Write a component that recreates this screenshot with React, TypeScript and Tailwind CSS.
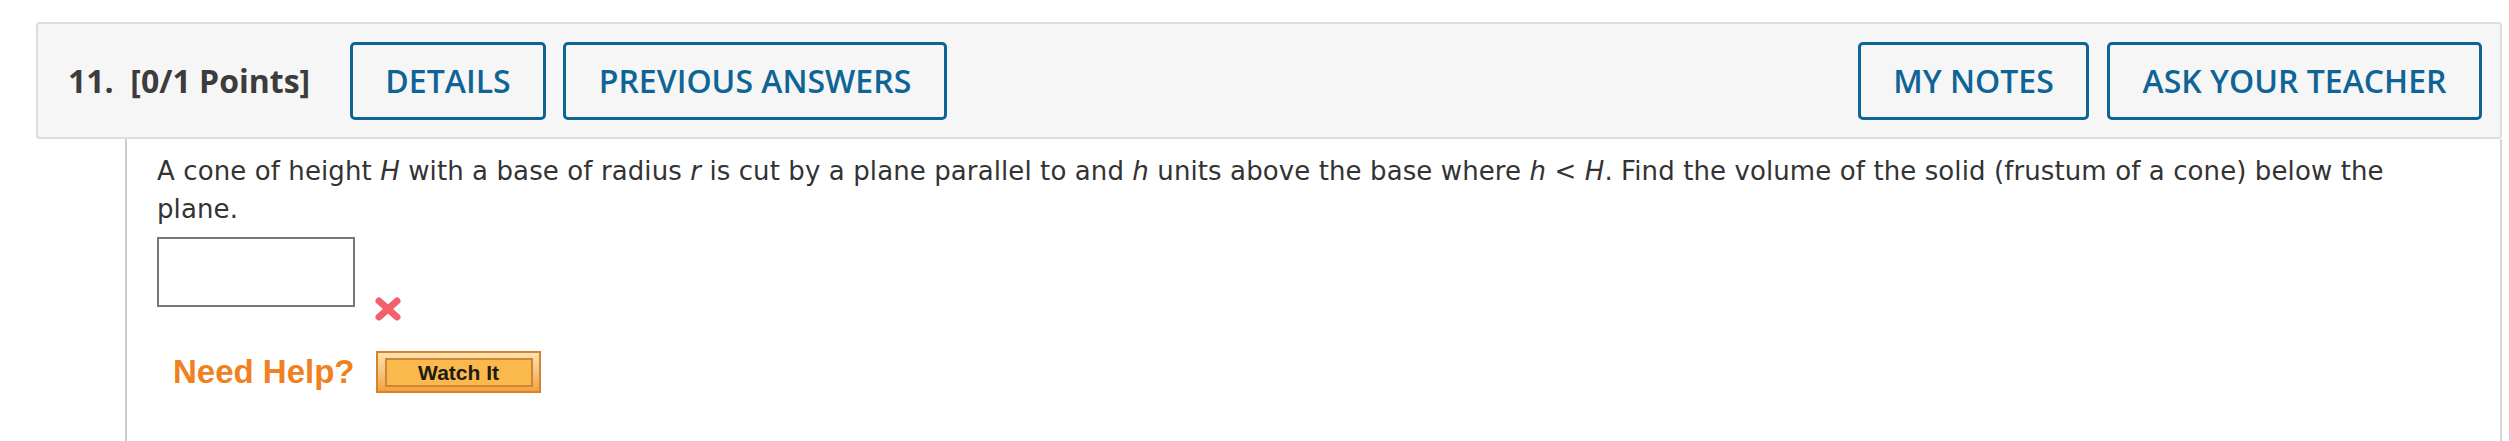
import React from 'react';

const HeaderButton: React.FC<{ label: string; width: string }> = ({ label, width }) => (
  <button
    className={`${width} flex h-[78px] items-center justify-center rounded-[5px] border-[3px] border-[#0f6496] bg-transparent text-[32px] font-semibold text-[#0f6496]`}
  >
    {label}
  </button>
);

const WrongMark = () => (
  <svg width="28" height="26" viewBox="0 0 28 26" className="mt-[59px] ml-[19px] shrink-0">
    <path d="M5 5 L23 21 M23 5 L5 21" stroke="#f1606b" strokeWidth="7" strokeLinecap="round" />
  </svg>
);

export default function App() {
  return (
    <div className="min-h-[441px] bg-white pt-[22px] pl-[36px] pr-[7px]">
      {/* question header */}
      <div className="flex h-[117px] items-center justify-between rounded-[4px] border-2 border-[#dddddd] bg-[#f6f6f6] pl-[30px] pr-[18px] font-['Open_Sans',sans-serif]">
        <div className="flex items-center">
          <span className="w-[282px] whitespace-pre text-[32px] font-bold text-[#3c3c3c]">11.  [0/1 Points]</span>
          <div className="flex gap-[17px]">
            <HeaderButton label="DETAILS" width="w-[196px]" />
            <HeaderButton label="PREVIOUS ANSWERS" width="w-[384px]" />
          </div>
        </div>
        <div className="flex gap-[18px]">
          <HeaderButton label="MY NOTES" width="w-[231px]" />
          <HeaderButton label="ASK YOUR TEACHER" width="w-[375px]" />
        </div>
      </div>

      {/* question body */}
      <div className="ml-[89px] min-h-[302px] border-l-2 border-r-2 border-l-[#cccccc] border-r-[#d6d6d6] pt-[13px] pl-[30px] pr-[80px]">
        <p className="font-['DejaVu_Sans',Verdana,sans-serif] text-[26px] leading-[38px] tracking-[0.1px] text-[#333333]">
          A cone of height <i>H</i> with a base of radius <i>r</i> is cut by a plane parallel to and <i>h</i> units above
          the base where <i>h</i> &lt; <i>H</i>. Find the volume of the solid (frustum of a cone) below the plane.
        </p>

        <div className="mt-[9px] flex items-start">
          <input type="text" className="h-[70px] w-[198px] border-2 border-[#777777] bg-white outline-none" />
          <WrongMark />
        </div>

        <div className="mt-[25px] flex items-center pl-[16px]">
          <span className="font-['Liberation_Sans',Arial,sans-serif] text-[33px] font-bold text-[#ef8122]">Need Help?</span>
          <button className="ml-[21px] h-[42px] w-[165px] border-2 border-[#d5832e] bg-gradient-to-b from-[#fde2b0] to-[#f3a23a] pt-[5px] pb-[4px] pl-[7px] pr-[6px]">
            <div className="flex h-full items-center justify-center border-2 border-[#cc8638] bg-[#fbb84c] font-['Liberation_Sans',Arial,sans-serif] text-[21px] font-bold text-[#1d1b16]">
              Watch It
            </div>
          </button>
        </div>
      </div>
    </div>
  );
}
